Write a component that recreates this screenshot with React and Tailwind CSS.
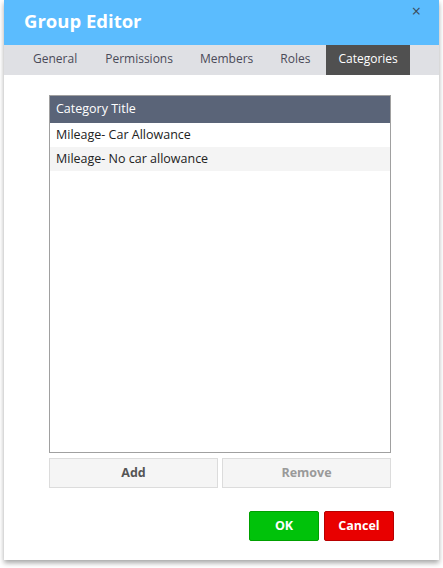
export default function App() {
  const font = { fontFamily: '"Open Sans", "Noto Sans", sans-serif' };
  return (
    <div className="w-[443px] h-[568px] bg-white" style={font}>
      <div className="ml-[4px] w-[435px] h-[560px] bg-white flex flex-col shadow-[0_3px_5px_rgba(0,0,0,0.35)]">
        <div className="h-[45px] bg-[#5bbcfe] flex items-center justify-between pl-[20px] pr-[16px] relative">
          <span className="text-white text-[18.5px] font-bold leading-none mt-[-3px]">Group Editor</span>
          <span className="absolute right-[18px] top-[3px] text-[#3c4a5a] text-[16px] leading-none">×</span>
        </div>
        <div className="h-[30px] bg-[#dfe0e4] flex items-stretch pl-[17px] text-[12px] text-[#4a4a58]">
          <div className="px-[12px] pb-[3px] flex items-center">General</div>
          <div className="px-[16px] pb-[3px] flex items-center">Permissions</div>
          <div className="px-[11px] pb-[3px] flex items-center">Members</div>
          <div className="px-[16px] pb-[3px] flex items-center">Roles</div>
          <div className="px-[12px] pb-[3px] flex items-center bg-[#505050] text-white">Categories</div>
        </div>
        <div className="flex-1 flex flex-col pl-[45px] pr-[48px] pt-[20px]">
          <div className="h-[358px] border border-[#a0a0a0] flex flex-col">
            <div className="h-[27px] bg-[#5a6478] text-white text-[12.5px] flex items-center px-[6px]">Category Title</div>
            <div className="h-[24px] bg-white text-[12.5px] text-[#222] flex items-center px-[6px]">Mileage- Car Allowance</div>
            <div className="h-[24px] bg-[#f4f4f4] text-[12.5px] text-[#222] flex items-center px-[6px]">Mileage- No car allowance</div>
          </div>
          <div className="mt-[5px] flex gap-[4px]">
            <div className="flex-1 h-[30px] bg-[#f5f5f5] border border-[#dcdcdc] flex items-center justify-center text-[12.5px] font-bold text-[#555]">Add</div>
            <div className="flex-1 h-[30px] bg-[#f5f5f5] border border-[#dcdcdc] flex items-center justify-center text-[12.5px] font-bold text-[#9a9a9a]">Remove</div>
          </div>
          <div className="mt-[23px] flex justify-end gap-[5px] mr-[-3px]">
            <div className="w-[70px] h-[30px] bg-[#00c20a] border border-[#00a000] rounded-[2px] flex items-center justify-center text-white text-[12.5px] font-bold">OK</div>
            <div className="w-[70px] h-[30px] bg-[#e80000] border border-[#b80000] rounded-[2px] flex items-center justify-center text-white text-[12.5px] font-bold">Cancel</div>
          </div>
        </div>
      </div>
    </div>
  );
}
